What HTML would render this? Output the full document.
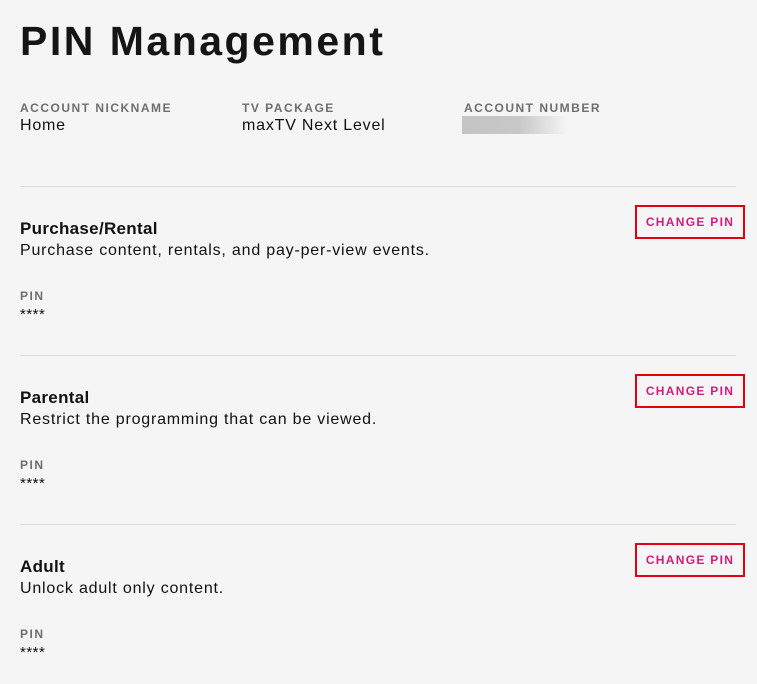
<!DOCTYPE html>
<html><head><style>
body{margin:0;width:757px;height:684px;background:#f5f5f5;font-family:"Liberation Sans",sans-serif;color:#111;position:relative;overflow:hidden}
.a{position:absolute;white-space:nowrap}
h1{position:absolute;left:20px;top:18px;margin:0;font-size:41px;font-weight:bold;letter-spacing:2.5px;color:#151515}
.lb{font-size:12px;font-weight:bold;color:#6e6e6e;letter-spacing:1.5px}
.v{font-size:16px;color:#111;letter-spacing:0.8px}
.hr{position:absolute;left:20px;width:716px;height:1px;background:#dcdcdc}
.h{font-size:17px;font-weight:bold;letter-spacing:0.3px}
.st{font-size:15px;letter-spacing:0.5px}
.btn{position:absolute;left:635px;width:106px;height:30px;border:2px solid #e3000f;color:#d31c7e;font-size:12px;font-weight:bold;letter-spacing:1.3px;text-align:center;line-height:31px}
</style></head><body>
<h1>PIN Management</h1>
<div class="a lb" style="left:20px;top:101px">ACCOUNT NICKNAME</div>
<div class="a v" style="left:20px;top:117px">Home</div>
<div class="a lb" style="left:242px;top:101px">TV PACKAGE</div>
<div class="a v" style="left:242px;top:117px">maxTV Next Level</div>
<div class="a lb" style="left:464px;top:101px">ACCOUNT NUMBER</div>
<div class="a" style="left:462px;top:116px;width:105px;height:18px;background:linear-gradient(90deg,#c4c4c4 0%,#c8c8c8 55%,#f5f5f5 100%)"></div>

<div class="hr" style="top:186px"></div>
<div class="a h" style="left:20px;top:219px">Purchase/Rental</div>
<div class="a v" style="left:20px;top:242px">Purchase content, rentals, and pay-per-view events.</div>
<div class="a lb" style="left:20px;top:289px">PIN</div>
<div class="a st" style="left:20px;top:306px">****</div>
<div class="btn" style="top:205px">CHANGE PIN</div>

<div class="hr" style="top:355px"></div>
<div class="a h" style="left:20px;top:388px">Parental</div>
<div class="a v" style="left:20px;top:411px">Restrict the programming that can be viewed.</div>
<div class="a lb" style="left:20px;top:458px">PIN</div>
<div class="a st" style="left:20px;top:475px">****</div>
<div class="btn" style="top:374px">CHANGE PIN</div>

<div class="hr" style="top:524px"></div>
<div class="a h" style="left:20px;top:557px">Adult</div>
<div class="a v" style="left:20px;top:580px">Unlock adult only content.</div>
<div class="a lb" style="left:20px;top:627px">PIN</div>
<div class="a st" style="left:20px;top:644px">****</div>
<div class="btn" style="top:543px">CHANGE PIN</div>
</body></html>
